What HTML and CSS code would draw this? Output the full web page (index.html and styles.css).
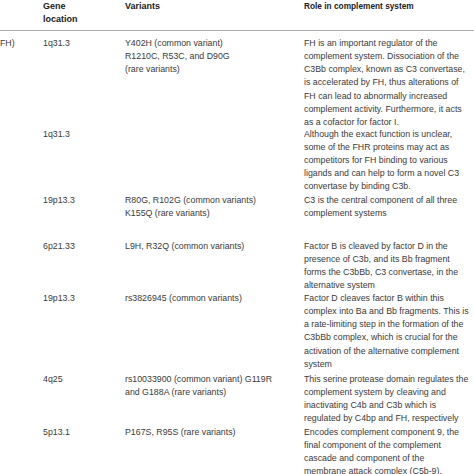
FILE: index.html
```html
<!DOCTYPE html>
<html>
<head>
<meta charset="utf-8">
<link rel="stylesheet" href="styles.css">
</head>
<body>
<div class="table">
  <div class="row head">
    <div class="cell c0"></div>
    <div class="cell c1">Gene<br>location</div>
    <div class="cell c2">Variants</div>
    <div class="cell c3">Role in complement system</div>
  </div>
  <div class="row r1">
    <div class="cell c0">FH)</div>
    <div class="cell c1">1q31.3</div>
    <div class="cell c2">Y402H (common variant)<br>R1210C, R53C, and D90G<br>(rare variants)</div>
    <div class="cell c3">FH is an important regulator of the<br>complement system. Dissociation of the<br>C3Bb complex, known as C3 convertase,<br>is accelerated by FH, thus alterations of<br>FH can lead to abnormally increased<br>complement activity. Furthermore, it acts<br>as a cofactor for factor I.</div>
  </div>
  <div class="row r2">
    <div class="cell c0"></div>
    <div class="cell c1">1q31.3</div>
    <div class="cell c2"></div>
    <div class="cell c3">Although the exact function is unclear,<br>some of the FHR proteins may act as<br>competitors for FH binding to various<br>ligands and can help to form a novel C3<br>convertase by binding C3b.</div>
  </div>
  <div class="row r3">
    <div class="cell c0"></div>
    <div class="cell c1">19p13.3</div>
    <div class="cell c2">R80G, R102G (common variants)<br>K155Q (rare variants)</div>
    <div class="cell c3">C3 is the central component of all three<br>complement systems</div>
  </div>
  <div class="row r4">
    <div class="cell c0"></div>
    <div class="cell c1">6p21.33</div>
    <div class="cell c2">L9H, R32Q (common variants)</div>
    <div class="cell c3">Factor B is cleaved by factor D in the<br>presence of C3b, and its Bb fragment<br>forms the C3bBb, C3 convertase, in the<br>alternative system</div>
  </div>
  <div class="row r5">
    <div class="cell c0"></div>
    <div class="cell c1">19p13.3</div>
    <div class="cell c2">rs3826945 (common variants)</div>
    <div class="cell c3">Factor D cleaves factor B within this<br>complex into Ba and Bb fragments. This is<br>a rate-limiting step in the formation of the<br>C3bBb complex, which is crucial for the<br>activation of the alternative complement<br>system</div>
  </div>
  <div class="row r6">
    <div class="cell c0"></div>
    <div class="cell c1">4q25</div>
    <div class="cell c2">rs10033900 (common variant) G119R<br>and G188A (rare variants)</div>
    <div class="cell c3">This serine protease domain regulates the<br>complement system by cleaving and<br>inactivating C4b and C3b which is<br>regulated by C4bp and FH, respectively</div>
  </div>
  <div class="row r7">
    <div class="cell c0"></div>
    <div class="cell c1">5p13.1</div>
    <div class="cell c2">P167S, R95S (rare variants)</div>
    <div class="cell c3">Encodes complement component 9, the<br>final component of the complement<br>cascade and component of the<br>membrane attack complex (C5b-9).</div>
  </div>
</div>
</body>
</html>
```

FILE: styles.css
```css
html, body {
  margin: 0;
  padding: 0;
  background: #ffffff;
}
body {
  width: 474px;
  height: 474px;
  overflow: hidden;
  font-family: "Liberation Sans", Arial, sans-serif;
  font-size: 8.8px;
  line-height: 13.15px;
  color: #3a3a3a;
}
.table {
  display: flex;
  flex-direction: column;
}
.row {
  display: grid;
  grid-template-columns: 43px 82px 179px 1fr;
}
.cell {
  white-space: nowrap;
}
.head {
  height: 30px;
  line-height: 13px;
  border-bottom: 1px solid #a8a8a8;
  font-weight: bold;
  font-size: 9px;
  color: #1a1a1a;
}
.head .c3 {
  font-size: 8.3px;
}
.r1 { padding-top: 6px; height: 90.5px; }
.r2 { height: 66px; }
.r3 { height: 46px; }
.r4 { height: 52.5px; }
.r5 { height: 80.5px; }
.r6 { height: 53.5px; }
.r7 { height: 60px; }
```
